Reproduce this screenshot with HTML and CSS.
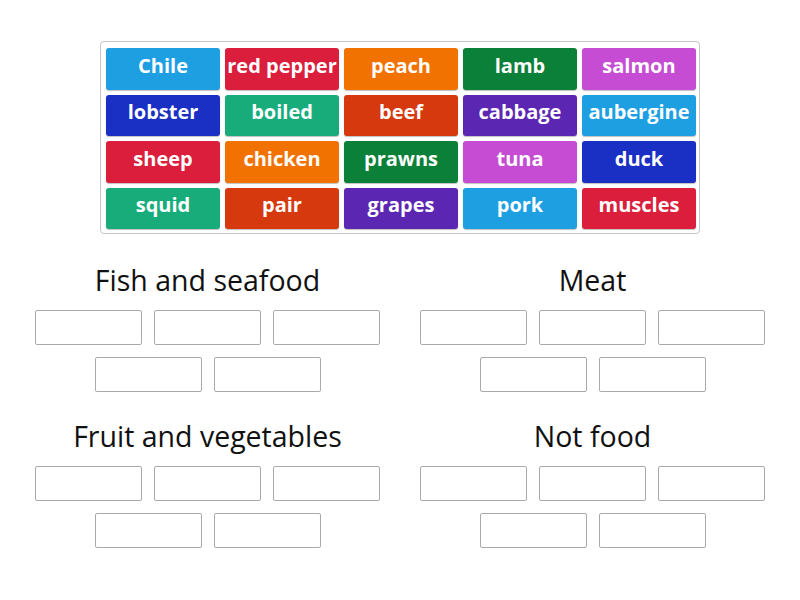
FILE: index.html
```html
<!DOCTYPE html>
<html lang="en">
<head>
    <meta charset="UTF-8">
    <title>Group sort</title>
    <link rel="stylesheet" href="styles.css">
</head>
<body>
    <div class="bank">
        <div class="tile blue">Chile</div>
        <div class="tile red">red pepper</div>
        <div class="tile orange">peach</div>
        <div class="tile green">lamb</div>
        <div class="tile pink">salmon</div>

        <div class="tile navy">lobster</div>
        <div class="tile teal">boiled</div>
        <div class="tile rust">beef</div>
        <div class="tile purple">cabbage</div>
        <div class="tile blue">aubergine</div>

        <div class="tile red">sheep</div>
        <div class="tile orange">chicken</div>
        <div class="tile green">prawns</div>
        <div class="tile pink">tuna</div>
        <div class="tile navy">duck</div>

        <div class="tile teal">squid</div>
        <div class="tile rust">pair</div>
        <div class="tile purple">grapes</div>
        <div class="tile blue">pork</div>
        <div class="tile red">muscles</div>
    </div>

    <div class="groups">
        <div class="group">
            <h2>Fish and seafood</h2>
            <div class="slots">
                <div class="slot"></div><div class="slot"></div><div class="slot"></div>
                <div class="slot"></div><div class="slot"></div>
            </div>
        </div>
        <div class="group">
            <h2>Meat</h2>
            <div class="slots">
                <div class="slot"></div><div class="slot"></div><div class="slot"></div>
                <div class="slot"></div><div class="slot"></div>
            </div>
        </div>
        <div class="group">
            <h2>Fruit and vegetables</h2>
            <div class="slots">
                <div class="slot"></div><div class="slot"></div><div class="slot"></div>
                <div class="slot"></div><div class="slot"></div>
            </div>
        </div>
        <div class="group">
            <h2>Not food</h2>
            <div class="slots">
                <div class="slot"></div><div class="slot"></div><div class="slot"></div>
                <div class="slot"></div><div class="slot"></div>
            </div>
        </div>
    </div>
</body>
</html>
```

FILE: styles.css
```css
body {
    margin: 0;
    font-family: "Open Sans", sans-serif;
    background: #fff;
    color: #111;
}
.bank {
    width: fit-content;
    margin: 41px auto 0;
    padding: 6px 3px 4px 5px;
    border: 1px solid #c4c4c4;
    border-radius: 4px;
    display: grid;
    grid-template-columns: repeat(5, 114px);
    grid-auto-rows: 41.5px;
    gap: 5px 5px;
}
.tile {
    display: flex;
    align-items: center;
    justify-content: center;
    border-radius: 3px;
    color: #fff;
    font-weight: 700;
    font-size: 20px;
    white-space: nowrap;
    box-shadow: 0 1px 1px rgba(0, 0, 0, 0.25);
    padding-bottom: 7px;
    box-sizing: border-box;
}
.blue { background: #1d9fe2; }
.red { background: #da1e3b; }
.orange { background: #f27200; }
.green { background: #0b8038; }
.pink { background: #c64dd3; }
.navy { background: #1a2fc3; }
.teal { background: #19ac7b; }
.rust { background: #d6390e; }
.purple { background: #5b27b2; }

.groups {
    width: 770px;
    margin: 28px auto 0;
    display: grid;
    grid-template-columns: 385px 385px;
    row-gap: 26px;
}
.group h2 {
    margin: 0 0 12px;
    font-size: 28.5px;
    font-weight: 400;
    line-height: 36px;
    text-align: center;
    color: #111;
}
.slots {
    display: flex;
    flex-wrap: wrap;
    justify-content: center;
    gap: 12px 12px;
    padding: 0 20px;
}
.slot {
    width: 107px;
    height: 35px;
    box-sizing: border-box;
    border: 1px solid #aaa;
    border-radius: 2px;
    background: #fff;
}
```
